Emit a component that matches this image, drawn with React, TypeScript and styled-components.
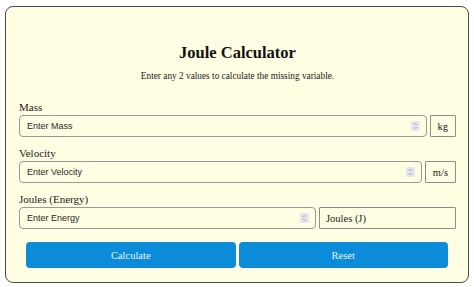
import React, { useState } from 'react'
import styled, { createGlobalStyle } from 'styled-components'

const GlobalStyle = createGlobalStyle`
  html, body {
    margin: 0;
    padding: 0;
    background: #ffffff;
  }
  * { box-sizing: border-box; }
`

const Card = styled.div`
  margin: 6px 5px 0 5px;
  height: 277px;
  background: #fffde2;
  border: 1.5px solid #4a4a4a;
  border-radius: 8px;
  padding: 36px 12px 12px 13px;
  font-family: "Liberation Serif", "Times New Roman", serif;
  color: #111;
`

const Title = styled.h2`
  margin: 0;
  font-size: 16.5px;
  line-height: 20px;
  font-weight: bold;
  text-align: center;
`

const Subtitle = styled.p`
  margin: 7px 0 0 0;
  font-size: 9.3px;
  line-height: 12px;
  text-align: center;
  color: #222;
`

const Form = styled.div`
  margin-top: 19px;
  display: flex;
  flex-direction: column;
  gap: 10px;
`

const Group = styled.div`
  display: flex;
  flex-direction: column;
  gap: 2px;
`

const Label = styled.label`
  font-size: 11px;
  line-height: 12px;
  color: #222;
`

const Row = styled.div`
  display: flex;
  gap: 3px;
  height: 22px;
`

const Field = styled.div`
  flex: 1;
  display: flex;
  align-items: center;
  border: 1px solid #9a9a94;
  border-radius: 4px;
  padding: 0 6px 0 7px;
  background: transparent;
`

const Input = styled.input`
  flex: 1;
  min-width: 0;
  border: none;
  outline: none;
  background: transparent;
  font-family: "Liberation Sans", Arial, sans-serif;
  font-size: 9px;
  color: #222;
  padding: 0;
  &::placeholder {
    color: #2a2a2a;
    opacity: 1;
  }
`

const Spin = styled.div`
  width: 9px;
  height: 10px;
  border-radius: 2px;
  background: #e6e4ee;
  display: flex;
  align-items: center;
  justify-content: center;
`

const Unit = styled.div<{ $width?: number }>`
  ${(p) => (p.$width ? `width: ${p.$width}px; padding: 0 6px;` : 'padding: 0 7px;')}
  display: flex;
  align-items: center;
  justify-content: ${(p) => (p.$width ? 'flex-start' : 'center')};
  border: 1px solid #8e8e88;
  border-radius: 1px;
  font-size: 10.5px;
  color: #222;
`

const Buttons = styled.div`
  margin-top: 13px;
  display: flex;
  gap: 3px;
  padding: 0 8px 0 7px;
`

const Button = styled.button`
  flex: 1;
  height: 26px;
  border: none;
  border-radius: 4px;
  background: #0b8bd8;
  color: #eaf5fc;
  font-family: "Liberation Serif", "Times New Roman", serif;
  font-size: 10.5px;
  cursor: pointer;
`

const SpinIcon = () => (
  <Spin>
    <svg width="5" height="8" viewBox="0 0 5 8">
      <path d="M0.8 3 L2.5 1.3 L4.2 3" fill="none" stroke="#8a8a99" strokeWidth="0.7" />
      <path d="M0.8 5 L2.5 6.7 L4.2 5" fill="none" stroke="#8a8a99" strokeWidth="0.7" />
    </svg>
  </Spin>
)

const fields = [
  { label: 'Mass', placeholder: 'Enter Mass', unit: 'kg' },
  { label: 'Velocity', placeholder: 'Enter Velocity', unit: 'm/s' },
  { label: 'Joules (Energy)', placeholder: 'Enter Energy', unit: 'Joules (J)', unitWidth: 137 },
]

const App = () => {
  const [values, setValues] = useState<string[]>(['', '', ''])

  const handleChange = (i: number, v: string) => {
    setValues((prev) => prev.map((x, j) => (j === i ? v : x)))
  }

  return (
    <>
      <GlobalStyle />
      <Card>
        <Title>Joule Calculator</Title>
        <Subtitle>Enter any 2 values to calculate the missing variable.</Subtitle>
        <Form>
          {fields.map((f, i) => (
            <Group key={f.label}>
              <Label>{f.label}</Label>
              <Row>
                <Field>
                  <Input
                    placeholder={f.placeholder}
                    value={values[i]}
                    onChange={(e) => handleChange(i, e.target.value)}
                  />
                  <SpinIcon />
                </Field>
                <Unit $width={f.unitWidth}>{f.unit}</Unit>
              </Row>
            </Group>
          ))}
        </Form>
        <Buttons>
          <Button>Calculate</Button>
          <Button onClick={() => setValues(['', '', ''])}>Reset</Button>
        </Buttons>
      </Card>
    </>
  )
}

export default App
